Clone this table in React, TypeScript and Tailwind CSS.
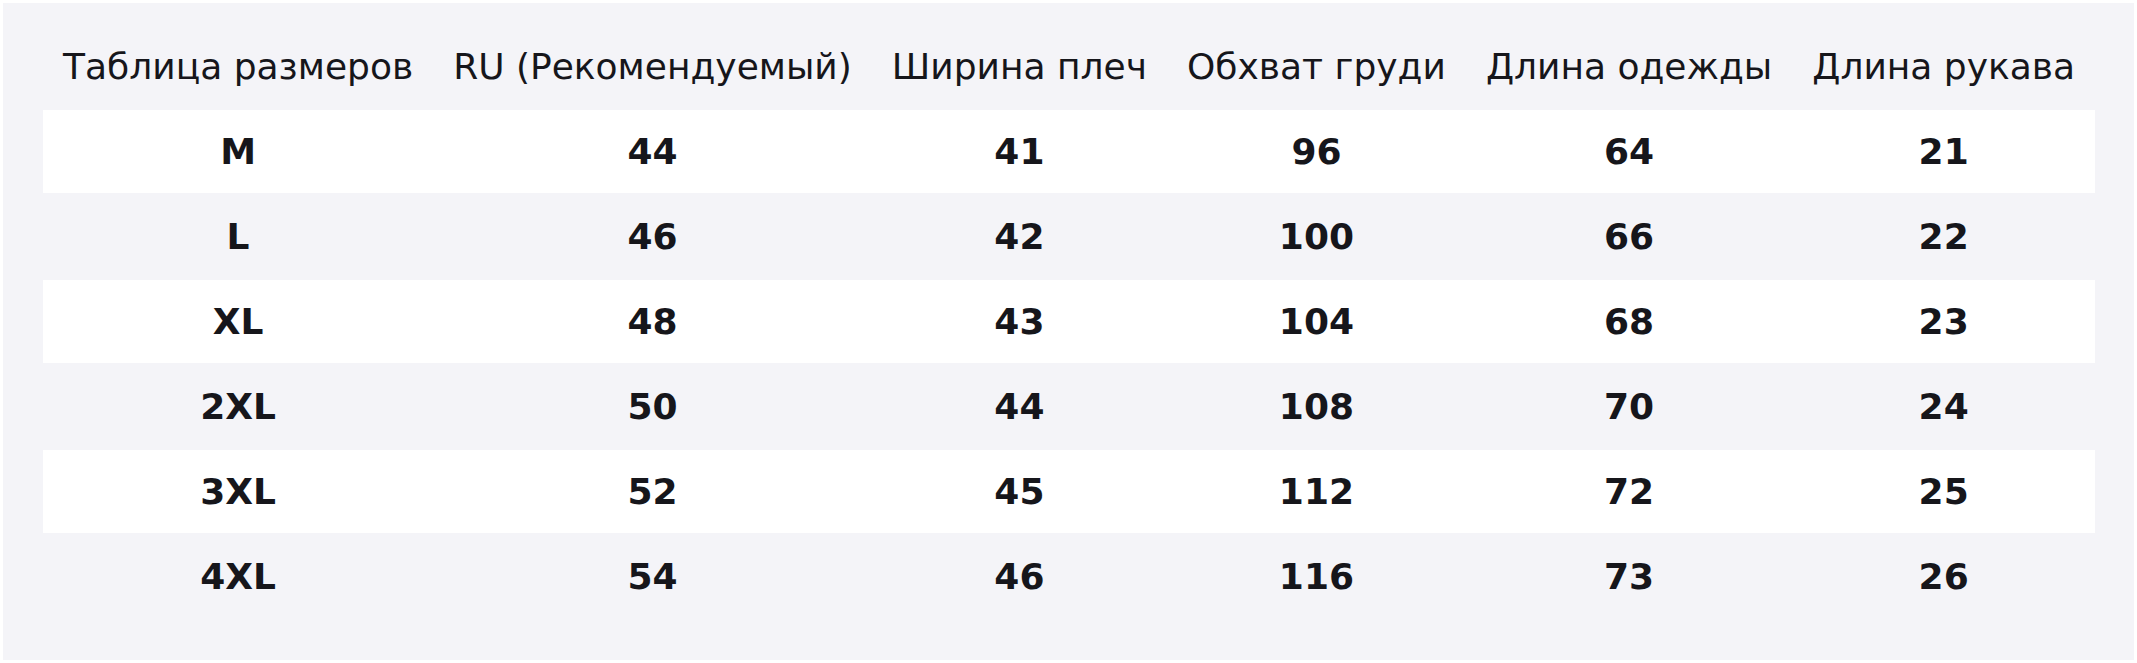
const HEADERS = [
  "Таблица размеров",
  "RU (Рекомендуемый)",
  "Ширина плеч",
  "Обхват груди",
  "Длина одежды",
  "Длина рукава",
];

const ROWS = [
  ["M", "44", "41", "96", "64", "21"],
  ["L", "46", "42", "100", "66", "22"],
  ["XL", "48", "43", "104", "68", "23"],
  ["2XL", "50", "44", "108", "70", "24"],
  ["3XL", "52", "45", "112", "72", "25"],
  ["4XL", "54", "46", "116", "73", "26"],
];

export default function App() {
  return (
    <div className="min-h-screen bg-white p-[3px] font-['DejaVu_Sans',sans-serif] text-[#16161b]">
      <div className="bg-[#f4f4f8] px-[40px] pt-[20px] pb-[40px]">
        <table className="w-full border-separate border-spacing-x-0 border-spacing-y-[2px] text-[36px]">
          <thead>
            <tr>
              {HEADERS.map((h) => (
                <th
                  key={h}
                  className="h-[83px] whitespace-nowrap px-5 text-center font-normal"
                >
                  {h}
                </th>
              ))}
            </tr>
          </thead>
          <tbody>
            {ROWS.map((row, i) => (
              <tr key={row[0]} className={i % 2 === 0 ? "bg-white" : ""}>
                {row.map((cell, j) => (
                  <td
                    key={j}
                    className="h-[83px] px-5 text-center font-bold"
                  >
                    {cell}
                  </td>
                ))}
              </tr>
            ))}
          </tbody>
        </table>
      </div>
    </div>
  );
}
